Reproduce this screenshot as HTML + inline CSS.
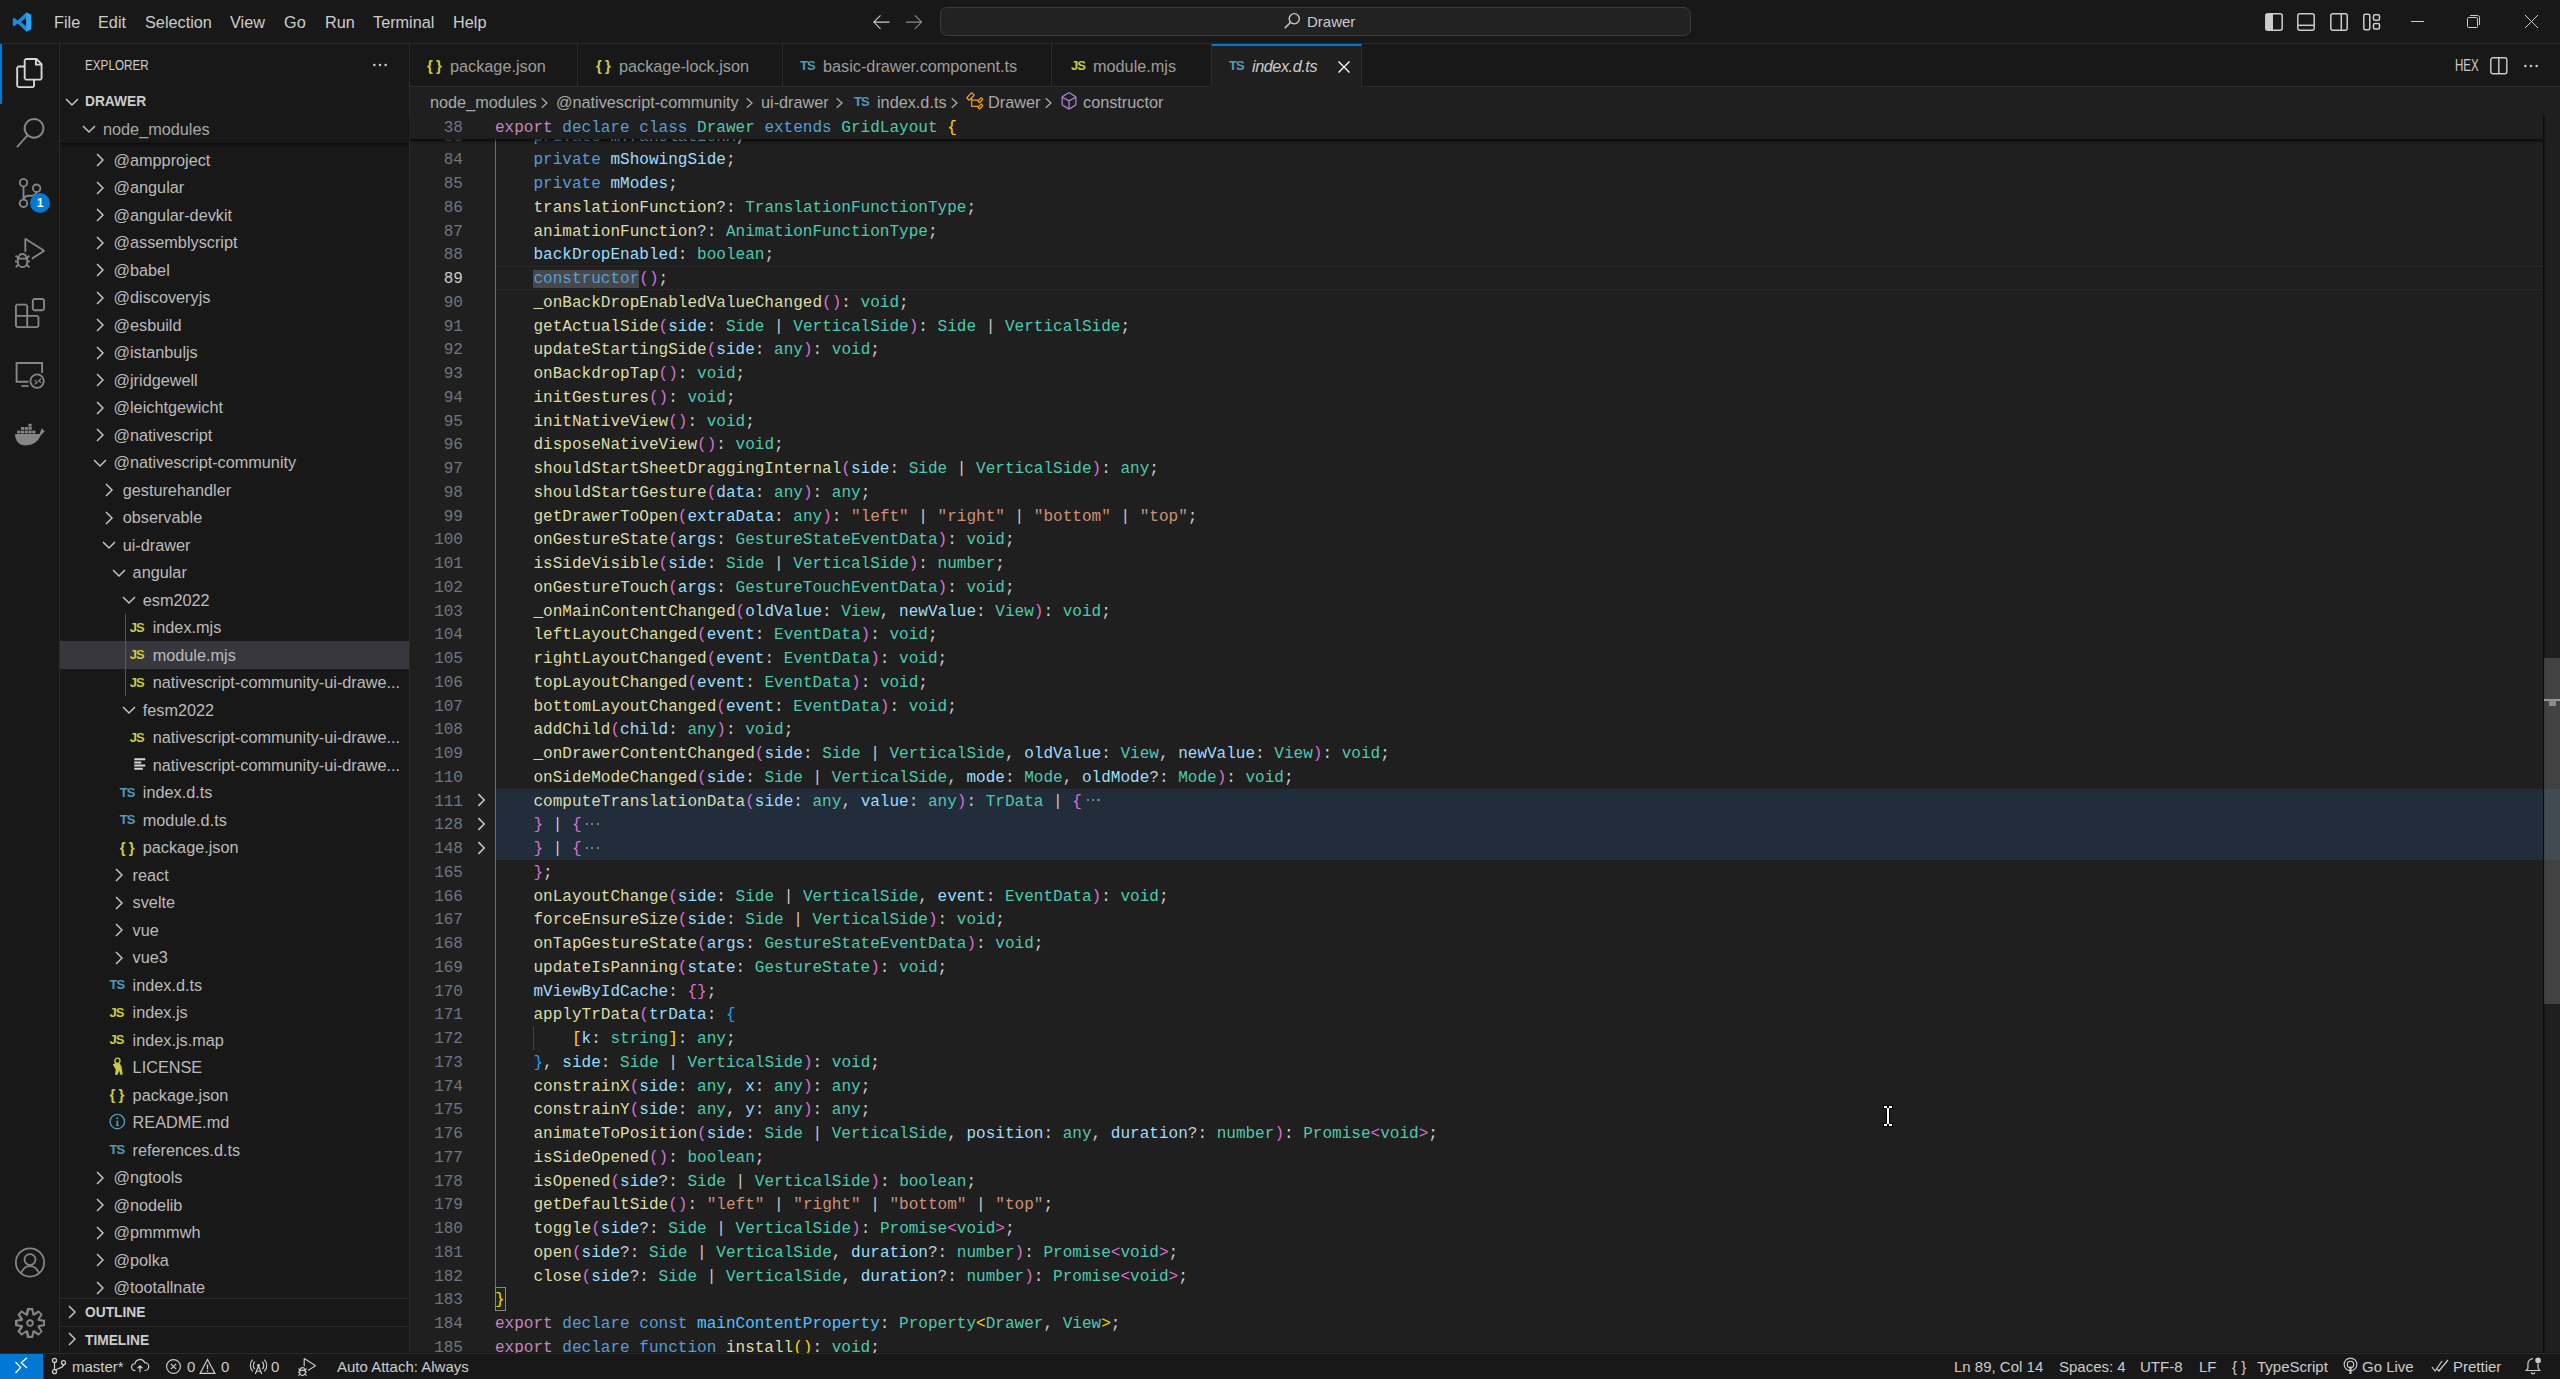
<!DOCTYPE html>
<html><head><meta charset="utf-8">
<style>
*{box-sizing:border-box}
html,body{margin:0;padding:0}
body{width:2560px;height:1379px;overflow:hidden;background:#181818;position:relative;font-family:"Liberation Sans",sans-serif;color:#cccccc}
.abs{position:absolute}
svg{display:block;overflow:visible}
/* title bar */
#title{position:absolute;left:0;top:0;width:2560px;height:44px;background:#181818;border-bottom:1px solid #2b2b2b}
.menu{position:absolute;top:12px;font-size:16.25px;line-height:20px;color:#cccccc}
#cc{position:absolute;left:940px;top:7px;width:751px;height:29px;border:1px solid #3a3a3a;border-radius:7px;background:#222222}
/* activity bar */
#act{position:absolute;left:0;top:44px;width:60px;height:1308px;background:#181818;border-right:1px solid #2b2b2b}
.ai{position:absolute;left:15px}
/* sidebar */
#side{position:absolute;left:60px;top:44px;width:350px;height:1308px;background:#181818;border-right:1px solid #2b2b2b;overflow:hidden}
.tr{position:absolute;left:0;width:349px;height:27.5px}
.tr.sel{background:#37373d}
.tt{position:absolute;top:0.5px;font-size:16.25px;line-height:27.5px;color:#bbbbbb;white-space:pre}
.chw{position:absolute;top:3.75px}
.icw{position:absolute;top:0;height:27.5px;width:20px}
.fi{position:absolute;top:0;line-height:27.5px;font-weight:bold;font-size:13px;letter-spacing:-1px}
.fi.js{color:#cbcb41}
.fi.ts{color:#519aba}
.fi.json{color:#cbcb41;font-weight:bold;font-size:15px;letter-spacing:-0.5px}
.fsv{position:absolute;top:6px;left:1px;width:18px;height:18px}
/* editor */
#ed{position:absolute;left:410px;top:44px;width:2150px;height:1308px;background:#1f1f1f;overflow:hidden}
#tabs{position:absolute;left:0;top:0;width:2150px;height:43px;background:#181818;border-bottom:1px solid #2b2b2b}
.tab{position:absolute;top:0;height:42px;border-right:1px solid #2b2b2b;background:#181818}
.tab.active{background:#1f1f1f;height:43px;border-top:2px solid #0078d4}
.tab .lbl{position:absolute;top:0;font-size:16.25px;line-height:44px;color:#9d9d9d;white-space:pre}
#code{position:absolute;left:0;top:0;width:2560px;height:1353px;overflow:hidden;font-family:"Liberation Mono",monospace;font-size:16.05px}
.cl{position:absolute;left:495px;height:23.75px;line-height:23.75px;white-space:pre;padding-top:2px}
.ln{position:absolute;left:410px;width:53px;text-align:right;height:23.75px;line-height:23.75px;color:#6e7681;padding-top:2px}
.ln.act{color:#cccccc}
.cl i{font-style:normal}
i.k{color:#569cd6} i.c{color:#c586c0} i.t{color:#4ec9b0} i.f{color:#dcdcaa} i.v{color:#9cdcfe} i.s{color:#ce9178}
i.p{color:#cccccc} i.g{color:#ffd700} i.o{color:#da70d6} i.b{color:#179fff} i.n{color:#4fc1ff} i.e{color:#8c8c8c}
i.h{color:#569cd6;background:#484848}
/* status */
#status{position:absolute;left:0;top:1353px;width:2560px;height:26px;background:#181818;border-top:1px solid #2b2b2b}
.st{position:absolute;top:0;font-size:15px;line-height:26px;color:#cccccc;white-space:pre}
</style></head><body>

<!-- TITLE BAR -->
<div id="title">
  <svg class="abs" style="left:12px;top:12px" width="20" height="20" viewBox="0 0 100 100">
    <path d="M71 2 96 14v72L71 98 28 58 11 71 4 67V33l7-4 17 13zM71 28 45 50l26 22z" fill="#1a8ae0"/>
    <path d="M71 2 96 14v72L71 98z" fill="#2aa3f0"/>
  </svg>
  <span class="menu" style="left:54px">File</span>
  <span class="menu" style="left:98px">Edit</span>
  <span class="menu" style="left:145px">Selection</span>
  <span class="menu" style="left:230px">View</span>
  <span class="menu" style="left:284px">Go</span>
  <span class="menu" style="left:325px">Run</span>
  <span class="menu" style="left:373px">Terminal</span>
  <span class="menu" style="left:453px">Help</span>
  <!-- nav arrows -->
  <svg class="abs" style="left:871px;top:11.5px" width="20" height="20" viewBox="0 0 20 20"><path d="M18.5 10.1H2.8M9.5 3.4 2.8 10.1 9.5 16.8" stroke="#cccccc" stroke-width="1.05" fill="none"/></svg>
  <svg class="abs" style="left:904px;top:11.5px" width="20" height="20" viewBox="0 0 20 20"><path d="M2 10.1H17.6M10.9 3.4 17.6 10.1 10.9 16.8" stroke="#8c8c8c" stroke-width="1.05" fill="none"/></svg>
  <div id="cc"></div>
  <svg class="abs" style="left:1283px;top:12px" width="18" height="18" viewBox="0 0 16 16"><circle cx="10" cy="6" r="4.5" stroke="#cccccc" stroke-width="1.2" fill="none"/><path d="M6.8 9.2 1.5 14.5" stroke="#cccccc" stroke-width="1.3"/></svg>
  <span class="menu" style="left:1307px;top:12px;font-size:15px">Drawer</span>
  <!-- layout icons -->
  <svg class="abs" style="left:2265px;top:12.5px" width="18" height="18" viewBox="0 0 18 18"><rect x="0.8" y="0.8" width="16.4" height="16.4" rx="2" fill="none" stroke="#cccccc" stroke-width="1.5"/><rect x="1" y="1" width="7" height="16" fill="#cccccc"/></svg>
  <svg class="abs" style="left:2297px;top:12.5px" width="18" height="18" viewBox="0 0 18 18"><rect x="0.8" y="0.8" width="16.4" height="16.4" rx="2" fill="none" stroke="#cccccc" stroke-width="1.5"/><path d="M1 12.3h16" stroke="#cccccc" stroke-width="1.5"/></svg>
  <svg class="abs" style="left:2330px;top:12.5px" width="18" height="18" viewBox="0 0 18 18"><rect x="0.8" y="0.8" width="16.4" height="16.4" rx="2" fill="none" stroke="#cccccc" stroke-width="1.5"/><path d="M11.3 1v16" stroke="#cccccc" stroke-width="1.5"/></svg>
  <svg class="abs" style="left:2363px;top:12.5px" width="18" height="18" viewBox="0 0 18 18"><rect x="0.8" y="1.2" width="6" height="15.6" rx="1.5" fill="none" stroke="#cccccc" stroke-width="1.5"/><rect x="10.5" y="1.8" width="6" height="5.5" rx="1.5" fill="none" stroke="#cccccc" stroke-width="1.5"/><rect x="10.5" y="10.6" width="6" height="5.5" rx="1.5" fill="none" stroke="#cccccc" stroke-width="1.5"/></svg>
  <!-- window controls -->
  <div class="abs" style="left:2411px;top:21px;width:13px;height:1px;background:#cccccc"></div>
  <svg class="abs" style="left:2466px;top:14px" width="15" height="15" viewBox="0 0 15 15"><rect x="1.5" y="3.5" width="10" height="10" rx="1" fill="none" stroke="#cccccc" stroke-width="1"/><path d="M4 1.5h7.5a2 2 0 0 1 2 2V11" fill="none" stroke="#cccccc" stroke-width="1"/></svg>
  <svg class="abs" style="left:2524px;top:14px" width="15" height="15" viewBox="0 0 15 15"><path d="M1 1 14 14M14 1 1 14" stroke="#cccccc" stroke-width="1"/></svg>
</div>

<!-- ACTIVITY BAR -->
<div id="act">
  <div class="abs" style="left:0;top:0;width:2px;height:60px;background:#0078d4"></div>
  <!-- explorer -->
  <svg class="ai" style="top:14px" width="30" height="30" viewBox="0 0 24 24"><path d="M17.5 0h-9L7 1.5V6H2.5L1 7.5v15.07L2.5 24h12.07L16 22.57V18h4.7l1.3-1.43V4.5L17.5 0zm0 2.12l2.38 2.38H17.5V2.12zm-3 20.38h-12v-15H7v9.07L8.5 18h6v4.5zm6-6h-12v-15H16V6h4.5v10.5z" fill="#d7d7d7"/></svg>
  <!-- search -->
  <svg class="ai" style="top:74px" width="30" height="30" viewBox="0 0 24 24"><path d="M15.25 0a8.25 8.25 0 0 0-6.18 13.72L1 22.88l1.12 1 8.05-9.12A8.251 8.251 0 1 0 15.25.01V0zm0 15a6.75 6.75 0 1 1 0-13.5 6.75 6.75 0 0 1 0 13.5z" fill="#868686"/></svg>
  <!-- source control -->
  <svg class="ai" style="top:134px" width="30" height="30" viewBox="0 0 24 24"><path d="M21.007 8.222A3.738 3.738 0 0 0 15.045 5.2a3.737 3.737 0 0 0 1.156 6.583 2.988 2.988 0 0 1-2.668 1.67h-2.99a4.456 4.456 0 0 0-2.989 1.165V7.4a3.737 3.737 0 1 0-1.494 0v9.117a3.776 3.776 0 1 0 1.816.099 2.99 2.99 0 0 1 2.668-1.667h2.99a4.484 4.484 0 0 0 4.223-3.039 3.736 3.736 0 0 0 3.25-3.687zM4.565 3.738a2.242 2.242 0 1 1 4.484 0 2.242 2.242 0 0 1-4.484 0zm4.484 16.441a2.242 2.242 0 1 1-4.484 0 2.242 2.242 0 0 1 4.484 0zm8.221-9.715a2.242 2.242 0 1 1 0-4.485 2.242 2.242 0 0 1 0 4.485z" fill="#868686"/></svg>
  <div class="abs" style="left:30px;top:149px;width:20px;height:20px;border-radius:10px;background:#0078d4;color:#fff;font-size:12px;font-weight:bold;line-height:20px;text-align:center">1</div>
  <!-- run debug -->
  <svg class="ai" style="top:194px" width="30" height="30" viewBox="0 0 24 24"><path d="M10.94 13.5l-1.32 1.32a3.73 3.73 0 0 0-7.24 0L1.06 13.5 0 14.56l1.72 1.72-.22.22V18H0v1.5h1.5v.08c.077.489.214.966.41 1.42L0 22.94 1.06 24l1.65-1.65A4.308 4.308 0 0 0 6 24a4.31 4.31 0 0 0 3.29-1.65L10.94 24 12 22.94 10.09 21c.198-.464.336-.951.41-1.45v-.1H12V18h-1.5v-1.5l-.22-.22L12 14.56l-1.06-1.06zM6 13.5a2.25 2.25 0 0 1 2.25 2.25h-4.5A2.25 2.25 0 0 1 6 13.5zm3 6a3.33 3.33 0 0 1-3 3 3.33 3.33 0 0 1-3-3v-2.25h6v2.25zm14.76-9.9v1.26L13.5 17.37V15.6l8.5-5.37L9 2v9.46a5.07 5.07 0 0 0-1.5-.72V.63L8.64 0l15.12 9.6z" fill="#868686"/></svg>
  <!-- extensions -->
  <svg class="ai" style="top:254px" width="30" height="30" viewBox="0 0 24 24"><path d="M13.5 1.5L15 0h7.5L24 1.5V9l-1.5 1.5H15L13.5 9V1.5zm1.5 0V9h7.5V1.5H15zM0 15V6l1.5-1.5H9L10.5 6v7.5H18l1.5 1.5v7.5L18 24H1.5L0 22.5V15zm9-1.5V6H1.5v7.5H9zM9 15H1.5v7.5H9V15zm1.5 7.5H18V15h-7.5v7.5z" fill="#868686"/></svg>
  <!-- remote explorer -->
  <svg class="ai" style="top:315px" width="30" height="30" viewBox="0 0 30 30"><path d="M13.5 22.7H1.6V4H27.1V14" stroke="#868686" stroke-width="1.9" fill="none"/><path d="M6.5 27H13.5" stroke="#868686" stroke-width="1.8"/><circle cx="22.1" cy="22.1" r="6.7" fill="none" stroke="#868686" stroke-width="1.8"/><path d="M19.6 21.2 22.2 23.2 19.6 25.2M26.2 19.8 23.6 21.8 26.2 23.8" stroke="#868686" stroke-width="1.2" fill="none"/></svg>
  <!-- docker -->
  <svg class="ai" style="top:376px" width="30" height="30" viewBox="0 0 30 30"><g fill="#868686"><rect x="2.2" y="10.6" width="3.2" height="2.8"/><rect x="5.95" y="10.6" width="3.2" height="2.8"/><rect x="9.7" y="10.6" width="3.2" height="2.8"/><rect x="13.45" y="10.6" width="3.2" height="2.8"/><rect x="17.2" y="10.6" width="3.2" height="2.8"/><rect x="5.95" y="7" width="3.2" height="2.8"/><rect x="9.7" y="7" width="3.2" height="2.8"/><rect x="13.45" y="7" width="3.2" height="2.8"/><rect x="13.45" y="3.8" width="3.2" height="2.8"/><path d="M0 14H24.6L26.8 8Q27.8 10.6 30 11.2Q27.6 13 25.8 15.6Q21.5 25.4 10.5 25.4Q0.8 25.4 0 14z"/></g></svg>
  <!-- account -->
  <svg class="ai" style="top:1203px" width="30" height="30" viewBox="0 0 24 24"><circle cx="12" cy="12.3" r="11.3" fill="none" stroke="#868686" stroke-width="1.4"/><circle cx="12" cy="10" r="4.4" fill="none" stroke="#868686" stroke-width="1.4"/><path d="M5 20.6C6.4 17 9 15.2 12 15.2S17.6 17 19 20.6" fill="none" stroke="#868686" stroke-width="1.4"/></svg>
  <!-- gear -->
  <svg class="ai" style="top:1264px" width="30" height="30" viewBox="0 0 24 24"><path d="M19.85 8.75l4.15.83v4.84l-4.15.83 2.35 3.52-3.43 3.43-3.52-2.35-.83 4.15H9.58l-.83-4.15-3.52 2.35-3.43-3.43 2.35-3.52L0 14.42V9.58l4.15-.83L1.8 5.23 5.23 1.8l3.52 2.35L9.58 0h4.84l.83 4.15 3.52-2.35 3.43 3.43-2.35 3.52zm-1.57 5.07l4.22-.85v-1.94l-4.22-.85-.28-1.38 2.39-3.59-1.37-1.37-3.59 2.39-1.38-.28-.85-4.22h-1.94l-.85 4.22-1.38.28-3.59-2.39-1.37 1.37 2.39 3.59-.28 1.38-4.22.85v1.94l4.22.85.28 1.38-2.39 3.59 1.37 1.37 3.59-2.39 1.38.28.85 4.22h1.94l.85-4.22 1.38-.28 3.59 2.39 1.37-1.37-2.39-3.59.28-1.38zM12 9a3 3 0 1 1 0 6 3 3 0 0 1 0-6zm0 1.5a1.5 1.5 0 1 0 0 3 1.5 1.5 0 0 0 0-3z" fill="#868686"/></svg>
</div>

<!-- SIDEBAR -->
<div id="side">
  <span class="abs" style="left:25px;top:12px;font-size:13.75px;line-height:20px;color:#cccccc;transform:scaleX(0.85);transform-origin:left">EXPLORER</span>
  <svg class="abs" style="left:310px;top:11px" width="20" height="20" viewBox="0 0 16 16"><circle cx="3.5" cy="8" r="1" fill="#cccccc"/><circle cx="8" cy="8" r="1" fill="#cccccc"/><circle cx="12.5" cy="8" r="1" fill="#cccccc"/></svg>
  <div class="abs" style="left:0;top:43.75px;width:349px;height:27.5px">
    <span class="abs" style="left:2px;top:3.75px"><svg class="chev" width="20" height="20" viewBox="0 0 16 16"><path d="M3.2 5.6 8 10.4 12.8 5.6" stroke="#c5c5c5" stroke-width="1.15" fill="none"/></svg></span>
    <span class="abs" style="left:25px;top:0;font-size:13.75px;line-height:27.5px;font-weight:bold;color:#cccccc">DRAWER</span>
  </div>
  <div class="abs" style="left:0;top:71.25px;width:349px;height:1226px;overflow:hidden">
    <div class="abs" style="left:0;top:-115.25px;width:349px;height:1400px">
<div class="tr" style="top:146.25px"><span class="chw" style="left:30.0px"><svg class="chev" width="20" height="20" viewBox="0 0 16 16"><path d="M5.6 3.2 10.4 8 5.6 12.8" stroke="#c5c5c5" stroke-width="1.15" fill="none"/></svg></span><span class="tt" style="left:53.5px">@ampproject</span></div>
<div class="tr" style="top:173.75px"><span class="chw" style="left:30.0px"><svg class="chev" width="20" height="20" viewBox="0 0 16 16"><path d="M5.6 3.2 10.4 8 5.6 12.8" stroke="#c5c5c5" stroke-width="1.15" fill="none"/></svg></span><span class="tt" style="left:53.5px">@angular</span></div>
<div class="tr" style="top:201.25px"><span class="chw" style="left:30.0px"><svg class="chev" width="20" height="20" viewBox="0 0 16 16"><path d="M5.6 3.2 10.4 8 5.6 12.8" stroke="#c5c5c5" stroke-width="1.15" fill="none"/></svg></span><span class="tt" style="left:53.5px">@angular-devkit</span></div>
<div class="tr" style="top:228.75px"><span class="chw" style="left:30.0px"><svg class="chev" width="20" height="20" viewBox="0 0 16 16"><path d="M5.6 3.2 10.4 8 5.6 12.8" stroke="#c5c5c5" stroke-width="1.15" fill="none"/></svg></span><span class="tt" style="left:53.5px">@assemblyscript</span></div>
<div class="tr" style="top:256.25px"><span class="chw" style="left:30.0px"><svg class="chev" width="20" height="20" viewBox="0 0 16 16"><path d="M5.6 3.2 10.4 8 5.6 12.8" stroke="#c5c5c5" stroke-width="1.15" fill="none"/></svg></span><span class="tt" style="left:53.5px">@babel</span></div>
<div class="tr" style="top:283.75px"><span class="chw" style="left:30.0px"><svg class="chev" width="20" height="20" viewBox="0 0 16 16"><path d="M5.6 3.2 10.4 8 5.6 12.8" stroke="#c5c5c5" stroke-width="1.15" fill="none"/></svg></span><span class="tt" style="left:53.5px">@discoveryjs</span></div>
<div class="tr" style="top:311.25px"><span class="chw" style="left:30.0px"><svg class="chev" width="20" height="20" viewBox="0 0 16 16"><path d="M5.6 3.2 10.4 8 5.6 12.8" stroke="#c5c5c5" stroke-width="1.15" fill="none"/></svg></span><span class="tt" style="left:53.5px">@esbuild</span></div>
<div class="tr" style="top:338.75px"><span class="chw" style="left:30.0px"><svg class="chev" width="20" height="20" viewBox="0 0 16 16"><path d="M5.6 3.2 10.4 8 5.6 12.8" stroke="#c5c5c5" stroke-width="1.15" fill="none"/></svg></span><span class="tt" style="left:53.5px">@istanbuljs</span></div>
<div class="tr" style="top:366.25px"><span class="chw" style="left:30.0px"><svg class="chev" width="20" height="20" viewBox="0 0 16 16"><path d="M5.6 3.2 10.4 8 5.6 12.8" stroke="#c5c5c5" stroke-width="1.15" fill="none"/></svg></span><span class="tt" style="left:53.5px">@jridgewell</span></div>
<div class="tr" style="top:393.75px"><span class="chw" style="left:30.0px"><svg class="chev" width="20" height="20" viewBox="0 0 16 16"><path d="M5.6 3.2 10.4 8 5.6 12.8" stroke="#c5c5c5" stroke-width="1.15" fill="none"/></svg></span><span class="tt" style="left:53.5px">@leichtgewicht</span></div>
<div class="tr" style="top:421.25px"><span class="chw" style="left:30.0px"><svg class="chev" width="20" height="20" viewBox="0 0 16 16"><path d="M5.6 3.2 10.4 8 5.6 12.8" stroke="#c5c5c5" stroke-width="1.15" fill="none"/></svg></span><span class="tt" style="left:53.5px">@nativescript</span></div>
<div class="tr" style="top:448.75px"><span class="chw" style="left:30.0px"><svg class="chev" width="20" height="20" viewBox="0 0 16 16"><path d="M3.2 5.6 8 10.4 12.8 5.6" stroke="#c5c5c5" stroke-width="1.15" fill="none"/></svg></span><span class="tt" style="left:53.5px">@nativescript-community</span></div>
<div class="tr" style="top:476.25px"><span class="chw" style="left:39.2px"><svg class="chev" width="20" height="20" viewBox="0 0 16 16"><path d="M5.6 3.2 10.4 8 5.6 12.8" stroke="#c5c5c5" stroke-width="1.15" fill="none"/></svg></span><span class="tt" style="left:62.7px">gesturehandler</span></div>
<div class="tr" style="top:503.75px"><span class="chw" style="left:39.2px"><svg class="chev" width="20" height="20" viewBox="0 0 16 16"><path d="M5.6 3.2 10.4 8 5.6 12.8" stroke="#c5c5c5" stroke-width="1.15" fill="none"/></svg></span><span class="tt" style="left:62.7px">observable</span></div>
<div class="tr" style="top:531.25px"><span class="chw" style="left:39.2px"><svg class="chev" width="20" height="20" viewBox="0 0 16 16"><path d="M3.2 5.6 8 10.4 12.8 5.6" stroke="#c5c5c5" stroke-width="1.15" fill="none"/></svg></span><span class="tt" style="left:62.7px">ui-drawer</span></div>
<div class="tr" style="top:558.75px"><span class="chw" style="left:49.1px"><svg class="chev" width="20" height="20" viewBox="0 0 16 16"><path d="M3.2 5.6 8 10.4 12.8 5.6" stroke="#c5c5c5" stroke-width="1.15" fill="none"/></svg></span><span class="tt" style="left:72.6px">angular</span></div>
<div class="tr" style="top:586.25px"><span class="chw" style="left:59.3px"><svg class="chev" width="20" height="20" viewBox="0 0 16 16"><path d="M3.2 5.6 8 10.4 12.8 5.6" stroke="#c5c5c5" stroke-width="1.15" fill="none"/></svg></span><span class="tt" style="left:82.8px">esm2022</span></div>
<div class="tr" style="top:613.75px"><span class="icw" style="left:69.7px"><span class="fi js">JS</span></span><span class="tt" style="left:92.7px">index.mjs</span></div>
<div class="tr sel" style="top:641.25px"><span class="icw" style="left:69.7px"><span class="fi js">JS</span></span><span class="tt" style="left:92.7px">module.mjs</span></div>
<div class="tr" style="top:668.75px"><span class="icw" style="left:69.7px"><span class="fi js">JS</span></span><span class="tt" style="left:92.7px">nativescript-community-ui-drawe...</span></div>
<div class="tr" style="top:696.25px"><span class="chw" style="left:59.3px"><svg class="chev" width="20" height="20" viewBox="0 0 16 16"><path d="M3.2 5.6 8 10.4 12.8 5.6" stroke="#c5c5c5" stroke-width="1.15" fill="none"/></svg></span><span class="tt" style="left:82.8px">fesm2022</span></div>
<div class="tr" style="top:723.75px"><span class="icw" style="left:69.7px"><span class="fi js">JS</span></span><span class="tt" style="left:92.7px">nativescript-community-ui-drawe...</span></div>
<div class="tr" style="top:751.25px"><span class="icw" style="left:69.7px"><svg class="fsv" width="16" height="16" viewBox="0 0 16 16"><path d="M2.9 1.1h9.8v1.8H2.9zM2.9 3.9h6.2v1.8H2.9zM2.9 6.7h9.8v1.8H2.9zM2.9 9.5h7.6v1.8H2.9z" fill="#d4d7d6"/></svg></span><span class="tt" style="left:92.7px">nativescript-community-ui-drawe...</span></div>
<div class="tr" style="top:778.75px"><span class="icw" style="left:59.8px"><span class="fi ts">TS</span></span><span class="tt" style="left:82.8px">index.d.ts</span></div>
<div class="tr" style="top:806.25px"><span class="icw" style="left:59.8px"><span class="fi ts">TS</span></span><span class="tt" style="left:82.8px">module.d.ts</span></div>
<div class="tr" style="top:833.75px"><span class="icw" style="left:59.8px"><span class="fi json">{ }</span></span><span class="tt" style="left:82.8px">package.json</span></div>
<div class="tr" style="top:861.25px"><span class="chw" style="left:49.1px"><svg class="chev" width="20" height="20" viewBox="0 0 16 16"><path d="M5.6 3.2 10.4 8 5.6 12.8" stroke="#c5c5c5" stroke-width="1.15" fill="none"/></svg></span><span class="tt" style="left:72.6px">react</span></div>
<div class="tr" style="top:888.75px"><span class="chw" style="left:49.1px"><svg class="chev" width="20" height="20" viewBox="0 0 16 16"><path d="M5.6 3.2 10.4 8 5.6 12.8" stroke="#c5c5c5" stroke-width="1.15" fill="none"/></svg></span><span class="tt" style="left:72.6px">svelte</span></div>
<div class="tr" style="top:916.25px"><span class="chw" style="left:49.1px"><svg class="chev" width="20" height="20" viewBox="0 0 16 16"><path d="M5.6 3.2 10.4 8 5.6 12.8" stroke="#c5c5c5" stroke-width="1.15" fill="none"/></svg></span><span class="tt" style="left:72.6px">vue</span></div>
<div class="tr" style="top:943.75px"><span class="chw" style="left:49.1px"><svg class="chev" width="20" height="20" viewBox="0 0 16 16"><path d="M5.6 3.2 10.4 8 5.6 12.8" stroke="#c5c5c5" stroke-width="1.15" fill="none"/></svg></span><span class="tt" style="left:72.6px">vue3</span></div>
<div class="tr" style="top:971.25px"><span class="icw" style="left:49.6px"><span class="fi ts">TS</span></span><span class="tt" style="left:72.6px">index.d.ts</span></div>
<div class="tr" style="top:998.75px"><span class="icw" style="left:49.6px"><span class="fi js">JS</span></span><span class="tt" style="left:72.6px">index.js</span></div>
<div class="tr" style="top:1026.25px"><span class="icw" style="left:49.6px"><span class="fi js">JS</span></span><span class="tt" style="left:72.6px">index.js.map</span></div>
<div class="tr" style="top:1053.75px"><span class="icw" style="left:49.6px"><svg class="fsv" style="top:3px" width="16" height="16" viewBox="0 0 16 16"><circle cx="5.7" cy="3.3" r="2.3" fill="none" stroke="#cbcb41" stroke-width="1.2"/><path d="M1.6 6.6 4.2 5.4 7.6 5.6 9.2 8 10.4 15.3 8.6 16.2 7.2 12.2 5.6 16 3.6 15.8 4.2 11z" fill="#cbcb41"/></svg></span><span class="tt" style="left:72.6px">LICENSE</span></div>
<div class="tr" style="top:1081.25px"><span class="icw" style="left:49.6px"><span class="fi json">{ }</span></span><span class="tt" style="left:72.6px">package.json</span></div>
<div class="tr" style="top:1108.75px"><span class="icw" style="left:49.6px"><svg class="fsv" width="16" height="16" viewBox="0 0 16 16"><circle cx="5.6" cy="5.8" r="6.4" fill="none" stroke="#519aba" stroke-width="1.2"/><rect x="4.9" y="4.9" width="1.5" height="4.4" fill="#519aba"/><rect x="4.2" y="8.8" width="2.9" height="0.9" fill="#519aba"/><circle cx="5.6" cy="2.9" r="0.9" fill="#519aba"/></svg></span><span class="tt" style="left:72.6px">README.md</span></div>
<div class="tr" style="top:1136.25px"><span class="icw" style="left:49.6px"><span class="fi ts">TS</span></span><span class="tt" style="left:72.6px">references.d.ts</span></div>
<div class="tr" style="top:1163.75px"><span class="chw" style="left:30.0px"><svg class="chev" width="20" height="20" viewBox="0 0 16 16"><path d="M5.6 3.2 10.4 8 5.6 12.8" stroke="#c5c5c5" stroke-width="1.15" fill="none"/></svg></span><span class="tt" style="left:53.5px">@ngtools</span></div>
<div class="tr" style="top:1191.25px"><span class="chw" style="left:30.0px"><svg class="chev" width="20" height="20" viewBox="0 0 16 16"><path d="M5.6 3.2 10.4 8 5.6 12.8" stroke="#c5c5c5" stroke-width="1.15" fill="none"/></svg></span><span class="tt" style="left:53.5px">@nodelib</span></div>
<div class="tr" style="top:1218.75px"><span class="chw" style="left:30.0px"><svg class="chev" width="20" height="20" viewBox="0 0 16 16"><path d="M5.6 3.2 10.4 8 5.6 12.8" stroke="#c5c5c5" stroke-width="1.15" fill="none"/></svg></span><span class="tt" style="left:53.5px">@pmmmwh</span></div>
<div class="tr" style="top:1246.25px"><span class="chw" style="left:30.0px"><svg class="chev" width="20" height="20" viewBox="0 0 16 16"><path d="M5.6 3.2 10.4 8 5.6 12.8" stroke="#c5c5c5" stroke-width="1.15" fill="none"/></svg></span><span class="tt" style="left:53.5px">@polka</span></div>
<div class="tr" style="top:1273.75px"><span class="chw" style="left:30.0px"><svg class="chev" width="20" height="20" viewBox="0 0 16 16"><path d="M5.6 3.2 10.4 8 5.6 12.8" stroke="#c5c5c5" stroke-width="1.15" fill="none"/></svg></span><span class="tt" style="left:53.5px">@tootallnate</span></div>
    </div>
    <!-- indent guide esm2022 -->
    <div class="abs" style="left:65px;top:498.5px;width:1px;height:82.5px;background:#585858"></div>
    <!-- sticky node_modules -->
    <div class="abs" style="left:0;top:0;width:349px;height:27.5px;background:#181818;box-shadow:0 2px 3px rgba(0,0,0,0.6)">
      <span class="abs" style="left:19px;top:3.75px"><svg class="chev" width="20" height="20" viewBox="0 0 16 16"><path d="M3.2 5.6 8 10.4 12.8 5.6" stroke="#c5c5c5" stroke-width="1.15" fill="none"/></svg></span>
      <span class="tt" style="left:43px;color:#a8a8a8">node_modules</span>
    </div>
  </div>
  <!-- outline / timeline -->
  <div class="abs" style="left:0;top:1254px;width:349px;height:27.5px;border-top:1px solid #2b2b2b">
    <span class="abs" style="left:2px;top:2.75px"><svg class="chev" width="20" height="20" viewBox="0 0 16 16"><path d="M5.6 3.2 10.4 8 5.6 12.8" stroke="#c5c5c5" stroke-width="1.15" fill="none"/></svg></span>
    <span class="abs" style="left:25px;top:0px;font-size:13.75px;line-height:27.5px;font-weight:bold;color:#cccccc">OUTLINE</span>
  </div>
  <div class="abs" style="left:0;top:1281.5px;width:349px;height:27.5px;border-top:1px solid #2b2b2b">
    <span class="abs" style="left:2px;top:2.75px"><svg class="chev" width="20" height="20" viewBox="0 0 16 16"><path d="M5.6 3.2 10.4 8 5.6 12.8" stroke="#c5c5c5" stroke-width="1.15" fill="none"/></svg></span>
    <span class="abs" style="left:25px;top:0px;font-size:13.75px;line-height:27.5px;font-weight:bold;color:#cccccc">TIMELINE</span>
  </div>
</div>

<!-- EDITOR -->
<div id="ed">
  <div id="tabs">
    <div class="tab" style="left:0;width:168px"><span class="fi json" style="left:17px;line-height:44px">{ }</span><span class="lbl" style="left:40px">package.json</span></div>
    <div class="tab" style="left:168px;width:205px"><span class="fi json" style="left:18px;line-height:44px">{ }</span><span class="lbl" style="left:41px">package-lock.json</span></div>
    <div class="tab" style="left:373px;width:269px"><span class="fi ts" style="left:17px;line-height:44px">TS</span><span class="lbl" style="left:40px">basic-drawer.component.ts</span></div>
    <div class="tab" style="left:642px;width:160px"><span class="fi js" style="left:19px;line-height:44px">JS</span><span class="lbl" style="left:41px">module.mjs</span></div>
    <div class="tab active" style="left:802px;width:150px"><span class="fi ts" style="left:17px;top:-2px;line-height:44px">TS</span><span class="lbl" style="left:40px;top:-2px;font-style:italic;color:#cccccc;letter-spacing:-0.45px">index.d.ts</span>
      <svg class="abs" style="left:125px;top:14px" width="14" height="14" viewBox="0 0 14 14"><path d="M1.5 1.5 12.5 12.5M12.5 1.5 1.5 12.5" stroke="#ffffff" stroke-width="1.4"/></svg>
    </div>
    <!-- right actions -->
    <span class="abs" style="left:2045px;top:12px;font-size:16px;line-height:20px;color:#cccccc;transform:scaleX(0.72);transform-origin:left">HEX</span>
    <svg class="abs" style="left:2080px;top:13px" width="18" height="18" viewBox="0 0 18 18"><rect x="0.8" y="0.8" width="16" height="16" rx="2" fill="none" stroke="#cccccc" stroke-width="1.4"/><path d="M8.8 1v16" stroke="#cccccc" stroke-width="1.4"/></svg>
    <svg class="abs" style="left:2111px;top:12px" width="20" height="20" viewBox="0 0 16 16"><circle cx="3.5" cy="8" r="1" fill="#cccccc"/><circle cx="8" cy="8" r="1" fill="#cccccc"/><circle cx="12.5" cy="8" r="1" fill="#cccccc"/></svg>
  </div>
  <!-- breadcrumbs -->
  <div class="abs" id="bc" style="left:0;top:45px;width:2150px;height:27px;font-size:16.25px;line-height:27px;color:#a9a9a9">
    <span class="abs" style="left:20px">node_modules</span>
    <svg class="abs" style="left:124.75px;top:4px" width="20" height="20" viewBox="0 0 16 16"><path d="M5.4 4.2 9.6 8 5.4 11.8" stroke="#a9a9a9" stroke-width="1.05" fill="none"/></svg>
    <span class="abs" style="left:146px">@nativescript-community</span>
    <svg class="abs" style="left:329.75px;top:4px" width="20" height="20" viewBox="0 0 16 16"><path d="M5.4 4.2 9.6 8 5.4 11.8" stroke="#a9a9a9" stroke-width="1.05" fill="none"/></svg>
    <span class="abs" style="left:351px">ui-drawer</span>
    <svg class="abs" style="left:419.75px;top:4px" width="20" height="20" viewBox="0 0 16 16"><path d="M5.4 4.2 9.6 8 5.4 11.8" stroke="#a9a9a9" stroke-width="1.05" fill="none"/></svg>
    <span class="fi ts" style="left:444px;top:-1.5px;line-height:27px">TS</span>
    <span class="abs" style="left:467px">index.d.ts</span>
    <svg class="abs" style="left:534.75px;top:4px" width="20" height="20" viewBox="0 0 16 16"><path d="M5.4 4.2 9.6 8 5.4 11.8" stroke="#a9a9a9" stroke-width="1.05" fill="none"/></svg>
    <svg class="abs" style="left:555px;top:2px" width="20" height="20" viewBox="0 0 16 16"><path d="M11.34 9.71h.71l2.67-2.67v-.71L13.38 5h-.7l-1.82 1.81h-5V5.56l1.86-1.85V3l-2-2H5L1 5v.71l2 2h.71l1.14-1.15v5.79l.5.5H10v.52l1.33 1.34h.71l2.67-2.67v-.71L13.37 10h-.7l-1.86 1.85h-5v-4H10v.48l1.34 1.38zm1.69-3.65l.63.63-2 2-.63-.63 2-2zm0 5l.63.63-2 2-.63-.63 2-2zM3.35 6.65 2.06 5.36 5.35 2.07l1.29 1.29-3.29 3.29z" fill="#ee9d28"/></svg>
    <span class="abs" style="left:578px">Drawer</span>
    <svg class="abs" style="left:629.25px;top:4px" width="20" height="20" viewBox="0 0 16 16"><path d="M5.4 4.2 9.6 8 5.4 11.8" stroke="#a9a9a9" stroke-width="1.05" fill="none"/></svg>
    <svg class="abs" style="left:649px;top:2px" width="20" height="20" viewBox="0 0 16 16"><path d="M13.51 4l-5-3h-1l-5 3-.49.86v6l.49.85 5 3h1l5-3 .49-.85v-6L13.51 4zm-6 9.56l-4.5-2.7V5.7l4.5 2.45v5.41zM3.27 4.7l4.74-2.84 4.74 2.84-4.74 2.59L3.27 4.7zm9.74 6.16l-4.5 2.7V8.15l4.5-2.45v5.16z" fill="#b180d7"/></svg>
    <span class="abs" style="left:673px">constructor</span>
  </div>
</div>

<!-- CODE -->
<div id="code">
  <!-- folded region bg -->
  <div class="abs" style="left:495px;top:788.5px;width:2065px;height:71.25px;background:#212d3a"></div>
  <!-- current line border -->
  <div class="abs" style="left:497px;top:266px;width:2046px;height:23.75px;border-top:1.5px solid #282828;border-bottom:1.5px solid #282828"></div>
  <!-- indent guides -->
  <div class="abs" style="left:495px;top:139px;width:1.25px;height:1148px;background:#707070"></div>
  <div class="abs" style="left:533px;top:1026px;width:1px;height:23.75px;background:#404040"></div>
  <!-- fold chevrons -->
  <svg class="abs" style="left:471px;top:790px" width="20" height="20" viewBox="0 0 16 16"><path d="M5.9 3.3 10.6 8 5.9 12.7" stroke="#c5c5c5" stroke-width="1.25" fill="none"/></svg>
  <svg class="abs" style="left:471px;top:813.75px" width="20" height="20" viewBox="0 0 16 16"><path d="M5.9 3.3 10.6 8 5.9 12.7" stroke="#c5c5c5" stroke-width="1.25" fill="none"/></svg>
  <svg class="abs" style="left:471px;top:837.5px" width="20" height="20" viewBox="0 0 16 16"><path d="M5.9 3.3 10.6 8 5.9 12.7" stroke="#c5c5c5" stroke-width="1.25" fill="none"/></svg>
  <!-- bracket match box 183 -->
  <div class="abs" style="left:495px;top:1287px;width:10.5px;height:24px;border:1px solid #888888;background:rgba(0,100,0,0.12)"></div>
<div class="ln" style="top:123.50px">83</div>
<div class="cl" style="top:123.50px"><i class="p">    </i><i class="k">private </i><i class="v">mTranslationX</i><i class="p">;</i></div>
<div class="ln" style="top:147.25px">84</div>
<div class="cl" style="top:147.25px"><i class="p">    </i><i class="k">private </i><i class="v">mShowingSide</i><i class="p">;</i></div>
<div class="ln" style="top:171.00px">85</div>
<div class="cl" style="top:171.00px"><i class="p">    </i><i class="k">private </i><i class="v">mModes</i><i class="p">;</i></div>
<div class="ln" style="top:194.75px">86</div>
<div class="cl" style="top:194.75px"><i class="p">    </i><i class="f">translationFunction</i><i class="p">?: </i><i class="t">TranslationFunctionType</i><i class="p">;</i></div>
<div class="ln" style="top:218.50px">87</div>
<div class="cl" style="top:218.50px"><i class="p">    </i><i class="f">animationFunction</i><i class="p">?: </i><i class="t">AnimationFunctionType</i><i class="p">;</i></div>
<div class="ln" style="top:242.25px">88</div>
<div class="cl" style="top:242.25px"><i class="p">    </i><i class="v">backDropEnabled</i><i class="p">: </i><i class="t">boolean</i><i class="p">;</i></div>
<div class="ln act" style="top:266.00px">89</div>
<div class="cl" style="top:266.00px"><i class="p">    </i><i class="h">constructor</i><i class="o">()</i><i class="p">;</i></div>
<div class="ln" style="top:289.75px">90</div>
<div class="cl" style="top:289.75px"><i class="p">    </i><i class="f">_onBackDropEnabledValueChanged</i><i class="o">()</i><i class="p">: </i><i class="t">void</i><i class="p">;</i></div>
<div class="ln" style="top:313.50px">91</div>
<div class="cl" style="top:313.50px"><i class="p">    </i><i class="f">getActualSide</i><i class="o">(</i><i class="v">side</i><i class="p">: </i><i class="t">Side </i><i class="p">| </i><i class="t">VerticalSide</i><i class="o">)</i><i class="p">: </i><i class="t">Side </i><i class="p">| </i><i class="t">VerticalSide</i><i class="p">;</i></div>
<div class="ln" style="top:337.25px">92</div>
<div class="cl" style="top:337.25px"><i class="p">    </i><i class="f">updateStartingSide</i><i class="o">(</i><i class="v">side</i><i class="p">: </i><i class="t">any</i><i class="o">)</i><i class="p">: </i><i class="t">void</i><i class="p">;</i></div>
<div class="ln" style="top:361.00px">93</div>
<div class="cl" style="top:361.00px"><i class="p">    </i><i class="f">onBackdropTap</i><i class="o">()</i><i class="p">: </i><i class="t">void</i><i class="p">;</i></div>
<div class="ln" style="top:384.75px">94</div>
<div class="cl" style="top:384.75px"><i class="p">    </i><i class="f">initGestures</i><i class="o">()</i><i class="p">: </i><i class="t">void</i><i class="p">;</i></div>
<div class="ln" style="top:408.50px">95</div>
<div class="cl" style="top:408.50px"><i class="p">    </i><i class="f">initNativeView</i><i class="o">()</i><i class="p">: </i><i class="t">void</i><i class="p">;</i></div>
<div class="ln" style="top:432.25px">96</div>
<div class="cl" style="top:432.25px"><i class="p">    </i><i class="f">disposeNativeView</i><i class="o">()</i><i class="p">: </i><i class="t">void</i><i class="p">;</i></div>
<div class="ln" style="top:456.00px">97</div>
<div class="cl" style="top:456.00px"><i class="p">    </i><i class="f">shouldStartSheetDraggingInternal</i><i class="o">(</i><i class="v">side</i><i class="p">: </i><i class="t">Side </i><i class="p">| </i><i class="t">VerticalSide</i><i class="o">)</i><i class="p">: </i><i class="t">any</i><i class="p">;</i></div>
<div class="ln" style="top:479.75px">98</div>
<div class="cl" style="top:479.75px"><i class="p">    </i><i class="f">shouldStartGesture</i><i class="o">(</i><i class="v">data</i><i class="p">: </i><i class="t">any</i><i class="o">)</i><i class="p">: </i><i class="t">any</i><i class="p">;</i></div>
<div class="ln" style="top:503.50px">99</div>
<div class="cl" style="top:503.50px"><i class="p">    </i><i class="f">getDrawerToOpen</i><i class="o">(</i><i class="v">extraData</i><i class="p">: </i><i class="t">any</i><i class="o">)</i><i class="p">: </i><i class="s">&quot;left&quot; </i><i class="p">| </i><i class="s">&quot;right&quot; </i><i class="p">| </i><i class="s">&quot;bottom&quot; </i><i class="p">| </i><i class="s">&quot;top&quot;</i><i class="p">;</i></div>
<div class="ln" style="top:527.25px">100</div>
<div class="cl" style="top:527.25px"><i class="p">    </i><i class="f">onGestureState</i><i class="o">(</i><i class="v">args</i><i class="p">: </i><i class="t">GestureStateEventData</i><i class="o">)</i><i class="p">: </i><i class="t">void</i><i class="p">;</i></div>
<div class="ln" style="top:551.00px">101</div>
<div class="cl" style="top:551.00px"><i class="p">    </i><i class="f">isSideVisible</i><i class="o">(</i><i class="v">side</i><i class="p">: </i><i class="t">Side </i><i class="p">| </i><i class="t">VerticalSide</i><i class="o">)</i><i class="p">: </i><i class="t">number</i><i class="p">;</i></div>
<div class="ln" style="top:574.75px">102</div>
<div class="cl" style="top:574.75px"><i class="p">    </i><i class="f">onGestureTouch</i><i class="o">(</i><i class="v">args</i><i class="p">: </i><i class="t">GestureTouchEventData</i><i class="o">)</i><i class="p">: </i><i class="t">void</i><i class="p">;</i></div>
<div class="ln" style="top:598.50px">103</div>
<div class="cl" style="top:598.50px"><i class="p">    </i><i class="f">_onMainContentChanged</i><i class="o">(</i><i class="v">oldValue</i><i class="p">: </i><i class="t">View</i><i class="p">, </i><i class="v">newValue</i><i class="p">: </i><i class="t">View</i><i class="o">)</i><i class="p">: </i><i class="t">void</i><i class="p">;</i></div>
<div class="ln" style="top:622.25px">104</div>
<div class="cl" style="top:622.25px"><i class="p">    </i><i class="f">leftLayoutChanged</i><i class="o">(</i><i class="v">event</i><i class="p">: </i><i class="t">EventData</i><i class="o">)</i><i class="p">: </i><i class="t">void</i><i class="p">;</i></div>
<div class="ln" style="top:646.00px">105</div>
<div class="cl" style="top:646.00px"><i class="p">    </i><i class="f">rightLayoutChanged</i><i class="o">(</i><i class="v">event</i><i class="p">: </i><i class="t">EventData</i><i class="o">)</i><i class="p">: </i><i class="t">void</i><i class="p">;</i></div>
<div class="ln" style="top:669.75px">106</div>
<div class="cl" style="top:669.75px"><i class="p">    </i><i class="f">topLayoutChanged</i><i class="o">(</i><i class="v">event</i><i class="p">: </i><i class="t">EventData</i><i class="o">)</i><i class="p">: </i><i class="t">void</i><i class="p">;</i></div>
<div class="ln" style="top:693.50px">107</div>
<div class="cl" style="top:693.50px"><i class="p">    </i><i class="f">bottomLayoutChanged</i><i class="o">(</i><i class="v">event</i><i class="p">: </i><i class="t">EventData</i><i class="o">)</i><i class="p">: </i><i class="t">void</i><i class="p">;</i></div>
<div class="ln" style="top:717.25px">108</div>
<div class="cl" style="top:717.25px"><i class="p">    </i><i class="f">addChild</i><i class="o">(</i><i class="v">child</i><i class="p">: </i><i class="t">any</i><i class="o">)</i><i class="p">: </i><i class="t">void</i><i class="p">;</i></div>
<div class="ln" style="top:741.00px">109</div>
<div class="cl" style="top:741.00px"><i class="p">    </i><i class="f">_onDrawerContentChanged</i><i class="o">(</i><i class="v">side</i><i class="p">: </i><i class="t">Side </i><i class="p">| </i><i class="t">VerticalSide</i><i class="p">, </i><i class="v">oldValue</i><i class="p">: </i><i class="t">View</i><i class="p">, </i><i class="v">newValue</i><i class="p">: </i><i class="t">View</i><i class="o">)</i><i class="p">: </i><i class="t">void</i><i class="p">;</i></div>
<div class="ln" style="top:764.75px">110</div>
<div class="cl" style="top:764.75px"><i class="p">    </i><i class="f">onSideModeChanged</i><i class="o">(</i><i class="v">side</i><i class="p">: </i><i class="t">Side </i><i class="p">| </i><i class="t">VerticalSide</i><i class="p">, </i><i class="v">mode</i><i class="p">: </i><i class="t">Mode</i><i class="p">, </i><i class="v">oldMode</i><i class="p">?: </i><i class="t">Mode</i><i class="o">)</i><i class="p">: </i><i class="t">void</i><i class="p">;</i></div>
<div class="ln" style="top:788.50px">111</div>
<div class="cl" style="top:788.50px"><i class="p">    </i><i class="f">computeTranslationData</i><i class="o">(</i><i class="v">side</i><i class="p">: </i><i class="t">any</i><i class="p">, </i><i class="v">value</i><i class="p">: </i><i class="t">any</i><i class="o">)</i><i class="p">: </i><i class="t">TrData </i><i class="p">| </i><i class="o">{</i></div>
<div class="abs" style="left:1086.83px;top:799.30px;width:2.2px;height:2.2px;background:#7c7c7c"></div>
<div class="abs" style="left:1092.03px;top:799.30px;width:2.2px;height:2.2px;background:#7c7c7c"></div>
<div class="abs" style="left:1097.43px;top:799.30px;width:2.2px;height:2.2px;background:#7c7c7c"></div>
<div class="ln" style="top:812.25px">128</div>
<div class="cl" style="top:812.25px"><i class="p">    </i><i class="o">} </i><i class="p">| </i><i class="o">{</i></div>
<div class="abs" style="left:586.07px;top:823.05px;width:2.2px;height:2.2px;background:#7c7c7c"></div>
<div class="abs" style="left:591.27px;top:823.05px;width:2.2px;height:2.2px;background:#7c7c7c"></div>
<div class="abs" style="left:596.67px;top:823.05px;width:2.2px;height:2.2px;background:#7c7c7c"></div>
<div class="ln" style="top:836.00px">148</div>
<div class="cl" style="top:836.00px"><i class="p">    </i><i class="o">} </i><i class="p">| </i><i class="o">{</i></div>
<div class="abs" style="left:586.07px;top:846.80px;width:2.2px;height:2.2px;background:#7c7c7c"></div>
<div class="abs" style="left:591.27px;top:846.80px;width:2.2px;height:2.2px;background:#7c7c7c"></div>
<div class="abs" style="left:596.67px;top:846.80px;width:2.2px;height:2.2px;background:#7c7c7c"></div>
<div class="ln" style="top:859.75px">165</div>
<div class="cl" style="top:859.75px"><i class="p">    </i><i class="o">}</i><i class="p">;</i></div>
<div class="ln" style="top:883.50px">166</div>
<div class="cl" style="top:883.50px"><i class="p">    </i><i class="f">onLayoutChange</i><i class="o">(</i><i class="v">side</i><i class="p">: </i><i class="t">Side </i><i class="p">| </i><i class="t">VerticalSide</i><i class="p">, </i><i class="v">event</i><i class="p">: </i><i class="t">EventData</i><i class="o">)</i><i class="p">: </i><i class="t">void</i><i class="p">;</i></div>
<div class="ln" style="top:907.25px">167</div>
<div class="cl" style="top:907.25px"><i class="p">    </i><i class="f">forceEnsureSize</i><i class="o">(</i><i class="v">side</i><i class="p">: </i><i class="t">Side </i><i class="p">| </i><i class="t">VerticalSide</i><i class="o">)</i><i class="p">: </i><i class="t">void</i><i class="p">;</i></div>
<div class="ln" style="top:931.00px">168</div>
<div class="cl" style="top:931.00px"><i class="p">    </i><i class="f">onTapGestureState</i><i class="o">(</i><i class="v">args</i><i class="p">: </i><i class="t">GestureStateEventData</i><i class="o">)</i><i class="p">: </i><i class="t">void</i><i class="p">;</i></div>
<div class="ln" style="top:954.75px">169</div>
<div class="cl" style="top:954.75px"><i class="p">    </i><i class="f">updateIsPanning</i><i class="o">(</i><i class="v">state</i><i class="p">: </i><i class="t">GestureState</i><i class="o">)</i><i class="p">: </i><i class="t">void</i><i class="p">;</i></div>
<div class="ln" style="top:978.50px">170</div>
<div class="cl" style="top:978.50px"><i class="p">    </i><i class="v">mViewByIdCache</i><i class="p">: </i><i class="o">{}</i><i class="p">;</i></div>
<div class="ln" style="top:1002.25px">171</div>
<div class="cl" style="top:1002.25px"><i class="p">    </i><i class="f">applyTrData</i><i class="o">(</i><i class="v">trData</i><i class="p">: </i><i class="b">{</i></div>
<div class="ln" style="top:1026.00px">172</div>
<div class="cl" style="top:1026.00px"><i class="p">        </i><i class="g">[</i><i class="v">k</i><i class="p">: </i><i class="t">string</i><i class="g">]</i><i class="p">: </i><i class="t">any</i><i class="p">;</i></div>
<div class="ln" style="top:1049.75px">173</div>
<div class="cl" style="top:1049.75px"><i class="p">    </i><i class="b">}</i><i class="p">, </i><i class="v">side</i><i class="p">: </i><i class="t">Side </i><i class="p">| </i><i class="t">VerticalSide</i><i class="o">)</i><i class="p">: </i><i class="t">void</i><i class="p">;</i></div>
<div class="ln" style="top:1073.50px">174</div>
<div class="cl" style="top:1073.50px"><i class="p">    </i><i class="f">constrainX</i><i class="o">(</i><i class="v">side</i><i class="p">: </i><i class="t">any</i><i class="p">, </i><i class="v">x</i><i class="p">: </i><i class="t">any</i><i class="o">)</i><i class="p">: </i><i class="t">any</i><i class="p">;</i></div>
<div class="ln" style="top:1097.25px">175</div>
<div class="cl" style="top:1097.25px"><i class="p">    </i><i class="f">constrainY</i><i class="o">(</i><i class="v">side</i><i class="p">: </i><i class="t">any</i><i class="p">, </i><i class="v">y</i><i class="p">: </i><i class="t">any</i><i class="o">)</i><i class="p">: </i><i class="t">any</i><i class="p">;</i></div>
<div class="ln" style="top:1121.00px">176</div>
<div class="cl" style="top:1121.00px"><i class="p">    </i><i class="f">animateToPosition</i><i class="o">(</i><i class="v">side</i><i class="p">: </i><i class="t">Side </i><i class="p">| </i><i class="t">VerticalSide</i><i class="p">, </i><i class="v">position</i><i class="p">: </i><i class="t">any</i><i class="p">, </i><i class="v">duration</i><i class="p">?: </i><i class="t">number</i><i class="o">)</i><i class="p">: </i><i class="t">Promise</i><i class="o">&lt;</i><i class="t">void</i><i class="o">&gt;</i><i class="p">;</i></div>
<div class="ln" style="top:1144.75px">177</div>
<div class="cl" style="top:1144.75px"><i class="p">    </i><i class="f">isSideOpened</i><i class="o">()</i><i class="p">: </i><i class="t">boolean</i><i class="p">;</i></div>
<div class="ln" style="top:1168.50px">178</div>
<div class="cl" style="top:1168.50px"><i class="p">    </i><i class="f">isOpened</i><i class="o">(</i><i class="v">side</i><i class="p">?: </i><i class="t">Side </i><i class="p">| </i><i class="t">VerticalSide</i><i class="o">)</i><i class="p">: </i><i class="t">boolean</i><i class="p">;</i></div>
<div class="ln" style="top:1192.25px">179</div>
<div class="cl" style="top:1192.25px"><i class="p">    </i><i class="f">getDefaultSide</i><i class="o">()</i><i class="p">: </i><i class="s">&quot;left&quot; </i><i class="p">| </i><i class="s">&quot;right&quot; </i><i class="p">| </i><i class="s">&quot;bottom&quot; </i><i class="p">| </i><i class="s">&quot;top&quot;</i><i class="p">;</i></div>
<div class="ln" style="top:1216.00px">180</div>
<div class="cl" style="top:1216.00px"><i class="p">    </i><i class="f">toggle</i><i class="o">(</i><i class="v">side</i><i class="p">?: </i><i class="t">Side </i><i class="p">| </i><i class="t">VerticalSide</i><i class="o">)</i><i class="p">: </i><i class="t">Promise</i><i class="o">&lt;</i><i class="t">void</i><i class="o">&gt;</i><i class="p">;</i></div>
<div class="ln" style="top:1239.75px">181</div>
<div class="cl" style="top:1239.75px"><i class="p">    </i><i class="f">open</i><i class="o">(</i><i class="v">side</i><i class="p">?: </i><i class="t">Side </i><i class="p">| </i><i class="t">VerticalSide</i><i class="p">, </i><i class="v">duration</i><i class="p">?: </i><i class="t">number</i><i class="o">)</i><i class="p">: </i><i class="t">Promise</i><i class="o">&lt;</i><i class="t">void</i><i class="o">&gt;</i><i class="p">;</i></div>
<div class="ln" style="top:1263.50px">182</div>
<div class="cl" style="top:1263.50px"><i class="p">    </i><i class="f">close</i><i class="o">(</i><i class="v">side</i><i class="p">?: </i><i class="t">Side </i><i class="p">| </i><i class="t">VerticalSide</i><i class="p">, </i><i class="v">duration</i><i class="p">?: </i><i class="t">number</i><i class="o">)</i><i class="p">: </i><i class="t">Promise</i><i class="o">&lt;</i><i class="t">void</i><i class="o">&gt;</i><i class="p">;</i></div>
<div class="ln" style="top:1287.25px">183</div>
<div class="cl" style="top:1287.25px"><i class="g">}</i></div>
<div class="ln" style="top:1311.00px">184</div>
<div class="cl" style="top:1311.00px"><i class="c">export </i><i class="k">declare const </i><i class="n">mainContentProperty</i><i class="p">: </i><i class="t">Property</i><i class="g">&lt;</i><i class="t">Drawer</i><i class="p">, </i><i class="t">View</i><i class="g">&gt;</i><i class="p">;</i></div>
<div class="ln" style="top:1334.75px">185</div>
<div class="cl" style="top:1334.75px"><i class="c">export </i><i class="k">declare function </i><i class="f">install</i><i class="g">()</i><i class="p">: </i><i class="t">void</i><i class="p">;</i></div>
<div class="ln" style="top:1358.50px">186</div>
<div class="cl" style="top:1358.50px"></div>
  <!-- sticky scroll -->
  <div class="abs" style="left:410px;top:115px;width:2133px;height:23.75px;background:#1f1f1f;box-shadow:0 2px 3px rgba(0,0,0,0.7)">
    <div class="ln" style="left:0;top:0">38</div>
    <div class="cl" style="left:85px;top:0"><i class="c">export </i><i class="k">declare class </i><i class="t">Drawer </i><i class="k">extends </i><i class="t">GridLayout </i><i class="g">{</i></div>
  </div>
  <!-- scrollbar -->
  <div class="abs" style="left:2543px;top:115px;width:3px;height:1237px;background:linear-gradient(90deg,rgba(0,0,0,0.5),rgba(0,0,0,0))"></div>
  <div class="abs" style="left:2543px;top:115px;width:1px;height:1237px;background:#0c0c0c"></div>
  <div class="abs" style="left:2544px;top:658px;width:16px;height:346px;background:rgba(121,121,121,0.4)"></div>
  <div class="abs" style="left:2544px;top:699px;width:16px;height:2px;background:#9a9a9a"></div>
  <div class="abs" style="left:2549px;top:700px;width:7px;height:6px;background:#8a8a8a"></div>
  <!-- mouse cursor I-beam -->
  <div class="abs" style="left:1883px;top:1105px;width:10px;height:4px;background:#000"></div>
  <div class="abs" style="left:1883px;top:1123px;width:10px;height:4px;background:#000"></div>
  <div class="abs" style="left:1886px;top:1107px;width:4px;height:18px;background:#000"></div>
  <div class="abs" style="left:1884px;top:1106px;width:3px;height:2px;background:#fff"></div>
  <div class="abs" style="left:1889px;top:1106px;width:3px;height:2px;background:#fff"></div>
  <div class="abs" style="left:1887px;top:1108px;width:2px;height:16px;background:#fff"></div>
  <div class="abs" style="left:1884px;top:1124px;width:3px;height:2px;background:#fff"></div>
  <div class="abs" style="left:1889px;top:1124px;width:3px;height:2px;background:#fff"></div>
</div>

<!-- STATUS BAR -->
<div id="status">
  <div class="abs" style="left:0;top:0;width:43px;height:26px;background:#0078d4"></div>
  <svg class="abs" style="left:12px;top:3px" width="18" height="18" viewBox="0 0 18 18"><path d="M3.5 5 8.6 10.5 3.5 16M15 0.7 9.3 5.8 15 11" stroke="#ffffff" stroke-width="1.3" fill="none"/></svg>
  <svg class="abs" style="left:50px;top:3px" width="18" height="18" viewBox="0 0 16 16"><circle cx="4" cy="3" r="1.8" stroke="#cccccc" stroke-width="1.1" fill="none"/><circle cx="4" cy="13" r="1.8" stroke="#cccccc" stroke-width="1.1" fill="none"/><circle cx="12" cy="5" r="1.8" stroke="#cccccc" stroke-width="1.1" fill="none"/><path d="M4 4.8v6.4M12 6.8c0 3-4 2.5-7.5 5" stroke="#cccccc" stroke-width="1.1" fill="none"/></svg>
  <span class="st" style="left:72px">master*</span>
  <svg class="abs" style="left:131px;top:4px" width="18" height="16" viewBox="0 0 16 14"><path d="M4 11H3.5a3 3 0 0 1 0-6 4.5 4.5 0 0 1 8.6-1A3.5 3.5 0 0 1 12.5 11H12M8 12.5V7M5.8 9 8 6.8 10.2 9" stroke="#cccccc" stroke-width="1.1" fill="none"/></svg>
  <svg class="abs" style="left:165px;top:4px" width="17" height="17" viewBox="0 0 16 16"><circle cx="8" cy="8" r="6.5" stroke="#cccccc" stroke-width="1.1" fill="none"/><path d="M5.5 5.5l5 5M10.5 5.5l-5 5" stroke="#cccccc" stroke-width="1.1"/></svg>
  <span class="st" style="left:187px">0</span>
  <svg class="abs" style="left:199px;top:4px" width="17" height="17" viewBox="0 0 16 16"><path d="M8 1.5 15 14.5H1z" stroke="#cccccc" stroke-width="1.1" fill="none"/><path d="M8 6v4.5M8 11.5v1.5" stroke="#cccccc" stroke-width="1.2"/></svg>
  <span class="st" style="left:221px">0</span>
  <svg class="abs" style="left:250px;top:4px" width="17" height="17" viewBox="0 0 16 16"><path d="M8 7.5 5 15M8 7.5l3 7.5M6 12.5h4M4.5 3.5a5 5 0 0 0 0 7M11.5 3.5a5 5 0 0 1 0 7M2.5 1.5a8 8 0 0 0 0 11M13.5 1.5a8 8 0 0 1 0 11" stroke="#cccccc" stroke-width="1.1" fill="none"/><circle cx="8" cy="7" r="1.3" fill="#cccccc"/></svg>
  <span class="st" style="left:271px">0</span>
  <svg class="abs" style="left:298px;top:4px" width="18" height="18" viewBox="0 0 24 24"><path d="M10.94 13.5l-1.32 1.32a3.73 3.73 0 0 0-7.24 0L1.06 13.5 0 14.56l1.72 1.72-.22.22V18H0v1.5h1.5v.08c.077.489.214.966.41 1.42L0 22.94 1.06 24l1.65-1.650A4.308 4.308 0 0 0 6 24a4.31 4.31 0 0 0 3.29-1.65L10.94 24 12 22.94 10.09 21c.198-.464.336-.951.41-1.45v-.1H12V18h-1.5v-1.5l-.22-.22L12 14.56l-1.06-1.06zM6 13.5a2.25 2.25 0 0 1 2.25 2.25h-4.5A2.250 2.25 0 0 1 6 13.5zm3 6a3.33 3.33 0 0 1-3 3 3.33 3.33 0 0 1-3-3v-2.25h6v2.25zm14.76-9.9v1.26L13.5 17.37V15.6l8.5-5.37L9 2v9.46a5.070 5.07 0 0 0-1.5-.72V.63L8.640 0l15.12 9.6z" fill="#cccccc"/></svg>
  <span class="st" style="left:337px">Auto Attach: Always</span>

  <span class="st" style="left:1954px">Ln 89, Col 14</span>
  <span class="st" style="left:2059px">Spaces: 4</span>
  <span class="st" style="left:2140px">UTF-8</span>
  <span class="st" style="left:2199px">LF</span>
  <span class="st" style="left:2232px">{ }</span>
  <span class="st" style="left:2257px">TypeScript</span>
  <svg class="abs" style="left:2342px;top:3px" width="17" height="18" viewBox="0 0 16 17"><circle cx="8" cy="7" r="6" stroke="#cccccc" stroke-width="1.1" fill="none"/><circle cx="8" cy="7" r="3" stroke="#cccccc" stroke-width="1.1" fill="none"/><path d="M8 9v7" stroke="#cccccc" stroke-width="2"/></svg>
  <span class="st" style="left:2362px">Go Live</span>
  <svg class="abs" style="left:2431px;top:5px" width="18" height="14" viewBox="0 0 18 14"><path d="M1 8l3 4 7-10M6 10l2 2 9-11" stroke="#cccccc" stroke-width="1.2" fill="none"/></svg>
  <span class="st" style="left:2453px">Prettier</span>
  <svg class="abs" style="left:2524px;top:3px" width="18" height="18" viewBox="0 0 16 16"><path d="M8 1.5a4.5 4.5 0 0 0-4.5 4.5v4l-1.5 2h12l-1.5-2V6" stroke="#cccccc" stroke-width="1.1" fill="none"/><path d="M6.5 13.5a1.5 1.5 0 0 0 3 0" stroke="#cccccc" stroke-width="1.1" fill="none"/><circle cx="12.5" cy="3" r="2.5" fill="#cccccc"/></svg>
</div>
</body></html>
